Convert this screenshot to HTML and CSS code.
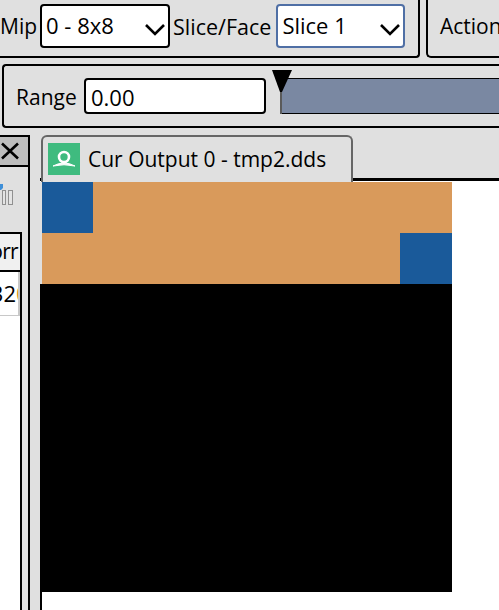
FILE: index.html
```html
<!DOCTYPE html>
<html lang="en">
<head>
<meta charset="utf-8">
<title>Texture Viewer</title>
<link rel="stylesheet" href="styles.css">
</head>
<body>
<div class="toolbar">
  <div class="group main-group">
    <span class="label">Mip</span>
    <div class="select mip"><span>0 - 8x8</span><svg class="chev" viewBox="0 0 22 14"><path d="M2 2 L11 11 L20 2" /></svg></div>
    <span class="label slice-label">Slice/Face</span>
    <div class="select slice"><span>Slice 1</span><svg class="chev" viewBox="0 0 22 14"><path d="M2 2 L11 11 L20 2" /></svg></div>
  </div>
  <div class="group actions"><span class="label">Actions</span></div>
</div>
<div class="range-panel">
  <span class="label range-label">Range</span>
  <div class="range-input">0.00</div>
  <div class="slider">
    <svg class="handle" viewBox="0 0 20 44"><path class="stem" d="M8 18 H10 V44 H8 Z"/><path class="tri" d="M0 0 H20 L10 22 H8 Z"/></svg>
    <div class="track"></div>
  </div>
</div>
<div class="content">
  <aside class="side">
    <div class="close"><svg viewBox="0 0 20 20"><path d="M2 2.5 L18 17.5 M18 2.5 L2 17.5"/></svg></div>
    <div class="side-body">
      <div class="mini-icons"><svg viewBox="0 0 18 24"><path class="b" d="M0 2 H3 V6 L1 8 H0 Z"/><rect class="g" x="2.5" y="8.5" width="3" height="14"/><rect class="g" x="8.5" y="8.5" width="4" height="14"/></svg></div>
      <div class="table">
        <div class="th"><span>orr</span></div>
        <div class="td"><span>32</span><i>0</i></div>
      </div>
    </div>
  </aside>
  <main class="viewer">
    <div class="tabs">
      <div class="tab">
        <svg class="tab-icon" viewBox="0 0 32 32"><rect width="32" height="32" fill="#3fbb7f"/><circle cx="16" cy="14" r="5" fill="none" stroke="#fff" stroke-width="2.6"/><path d="M5 23 Q16 17 27 23 Q16 20.5 5 23Z" fill="#fff" stroke="#fff"/></svg>
        <span class="tab-title">Cur Output 0 - tmp2.dds</span>
      </div>
    </div>
    <div class="canvas">
      <div class="texture">
        <div class="row"><b class="blue"></b></div>
        <div class="row bottom"><b class="blue wide"></b></div>
      </div>
    </div>
  </main>
</div>
</body>
</html>
```

FILE: styles.css
```css
* { box-sizing: border-box; }
html, body { margin: 0; height: 100%; overflow: hidden; }
body { width: 499px; height: 610px; background: #e0e0e0; color: #000; font-family: "Open Sans", "Noto Sans", sans-serif; font-size: 21px; }
.label { white-space: nowrap; }
.toolbar { display: flex; height: 58px; margin-bottom: 6px; gap: 6px; }
.group { display: flex; align-items: center; border: 2px solid #000; border-top: 0; }
.main-group { width: 420px; flex: none; border-left: 0; border-radius: 0 0 4px 0; padding: 0 0 4px 0; gap: 3px; }
.actions { flex: 1; border-right: 0; border-radius: 0 0 0 5px; padding: 0 0 4px 12px; }
.slice-label { font-size: 21.5px; }
.select { height: 44px; background: #fff; border: 2px solid #000; border-radius: 4px; display: flex; align-items: center; justify-content: space-between; padding: 0 2px 2px 4px; font-size: 22px; }
.mip { width: 130px; }
.slice { width: 129px; margin-left: 2px; border-color: #4f6fa5; }
.chev { width: 22px; height: 14px; margin-top: 9px; }
.chev path { fill: none; stroke: #000; stroke-width: 2.6; }
.range-panel { height: 64px; margin-left: 2px; border: 2px solid #000; border-right: 0; border-radius: 4px 0 0 4px; display: flex; align-items: flex-start; padding: 12px 0 0 12px; }
.range-label { margin-top: 5px; width: 68px; flex: none; }
.range-input { width: 182px; height: 36px; flex: none; background: #fff; border: 2px solid #000; border-radius: 4px; padding: 0 5px; line-height: 34px; font-size: 22px; }
.slider { position: relative; flex: 1; margin-left: 14px; height: 36px; }
.handle { position: absolute; left: -8px; top: -8px; width: 20px; height: 44px; }
.tri { fill: #000; }
.stem { fill: #5a5a5a; }
.track { height: 36px; margin-left: 2px; background: #7a88a2; border: solid #000; border-width: 1px 0; }
.content { display: flex; height: 482px; padding-top: 7px; }
.side { width: 30px; flex: none; margin-right: 10px; display: flex; flex-direction: column; }
.close { height: 32px; background: #bdbdbd; border: solid #000; border-width: 2px 2px 2px 0; display: flex; align-items: center; }
.close svg { width: 20px; height: 20px; }
.close path { stroke: #000; stroke-width: 2.6; fill: none; }
.side-body { flex: 1; border-right: 2px solid #000; display: flex; flex-direction: column; }
.mini-icons { height: 65px; padding-top: 15px; }
.mini-icons svg { width: 18px; height: 24px; display: block; }
.b { fill: #3f8fd8; }
.g { fill: #e4e4e4; stroke: #909090; }
.table { width: 22px; flex: 1; background: #fff; border: solid #000; border-width: 2px 2px 0 0; overflow: hidden; }
.th, .td { display: flex; justify-content: flex-end; white-space: nowrap; overflow: hidden; }
.th { height: 38px; background: #f0f0f0; border-bottom: 2px solid #000; line-height: 34px; padding-right: 2px; letter-spacing: -0.7px; }
.td { height: 44px; line-height: 42px; font-size: 22px; border: solid #c8c8c8; border-width: 0 2px 1px 0; }
.th span, .td span { flex: none; }
.td i { flex: none; width: 2px; overflow: hidden; color: #e09020; font-style: normal; }
.viewer { flex: 1; display: flex; flex-direction: column; min-width: 0; }
.tabs { height: 47px; flex: none; position: relative; }
.tabs::after { content: ""; position: absolute; left: 0; right: 0; bottom: 0; height: 3px; background: #000; border-bottom: 1px solid #fff; }
.tab { position: relative; z-index: 1; width: 312px; height: 47px; margin-left: 1px; background: #e0e0e0; border: 1px solid #666; border-width: 2px 2px 0; border-radius: 6px 6px 0 0; display: flex; align-items: center; gap: 8px; padding: 0 0 2px 5px; white-space: nowrap; }
.tab-icon { width: 32px; height: 32px; flex: none; }
.tab-title { margin-top: 1px; }
.canvas { flex: 1; background: #fff; border-left: 2px solid #000; }
.texture { width: 410px; height: 410px; background: #000; }
.row { height: 51px; background: #d99a5b; display: flex; box-shadow: -2px 0 0 #e0e0e0; }
.bottom { justify-content: flex-end; }
.blue { display: block; width: 51px; background: #1a5a9a; }
.wide { width: 52px; }
```
